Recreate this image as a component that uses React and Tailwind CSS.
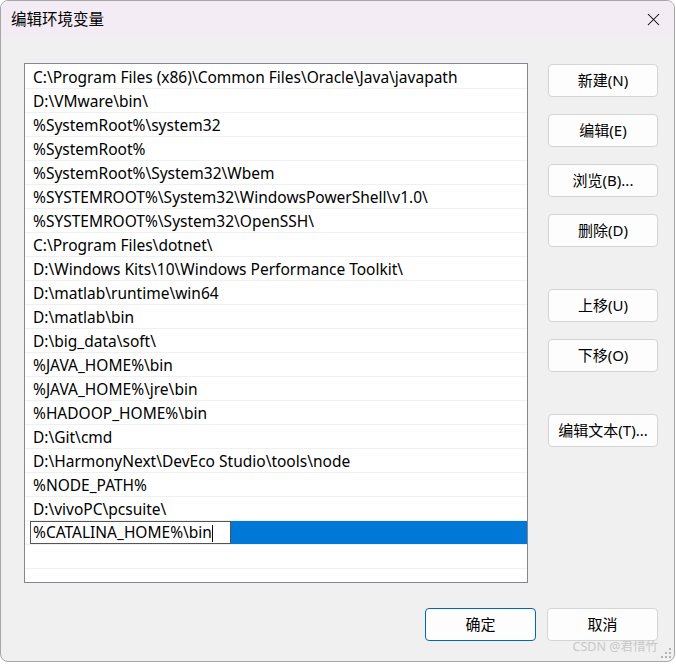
import { X } from "lucide-react";

const paths = [
  "C:\\Program Files (x86)\\Common Files\\Oracle\\Java\\javapath",
  "D:\\VMware\\bin\\",
  "%SystemRoot%\\system32",
  "%SystemRoot%",
  "%SystemRoot%\\System32\\Wbem",
  "%SYSTEMROOT%\\System32\\WindowsPowerShell\\v1.0\\",
  "%SYSTEMROOT%\\System32\\OpenSSH\\",
  "C:\\Program Files\\dotnet\\",
  "D:\\Windows Kits\\10\\Windows Performance Toolkit\\",
  "D:\\matlab\\runtime\\win64",
  "D:\\matlab\\bin",
  "D:\\big_data\\soft\\",
  "%JAVA_HOME%\\bin",
  "%JAVA_HOME%\\jre\\bin",
  "%HADOOP_HOME%\\bin",
  "D:\\Git\\cmd",
  "D:\\HarmonyNext\\DevEco Studio\\tools\\node",
  "%NODE_PATH%",
  "D:\\vivoPC\\pcsuite\\",
];

const font = "font-['Noto_Sans','Noto_Sans_CJK_SC',sans-serif]";

function Btn({ children, primary, className = "" }) {
  return (
    <button
      className={`w-[110px] h-[33px] rounded-[4px] bg-[#fdfdfd] text-[15px] text-black flex items-center justify-center ${
        primary ? "border border-[#0067c0]" : "border border-[#d4d4d4]"
      } ${className}`}
    >
      {children}
    </button>
  );
}

function Grip() {
  const dots = [
    [8, 0], [8, 4], [4, 4], [8, 8], [4, 8], [0, 8],
  ];
  return (
    <svg width="11" height="11" viewBox="0 0 11 11">
      {dots.map(([x, y]) => (
        <rect key={`${x}-${y}`} x={x} y={y} width="2" height="2" fill="#b4b4b4" />
      ))}
    </svg>
  );
}

export default function App() {
  return (
    <div className={`w-[676px] h-[664px] bg-white ${font}`}>
      <div className="relative w-[675px] h-[662px] border border-[#a6a6a6] rounded-[8px] overflow-hidden bg-[#f0f0f0] flex flex-col">
        <div className="h-[37px] bg-[#f4ecf4] flex items-center justify-between pl-[10px] pr-[10px] shrink-0">
          <span className="text-[15.5px] text-black">编辑环境变量</span>
          <X className="w-[21px] h-[21px] text-black" strokeWidth={1.2} />
        </div>

        <div className="flex pl-[23px] pt-[25px]">
          <div className="w-[504px] h-[520px] border border-[#828790] bg-white pt-[1px] text-[15.5px] text-black">
            {paths.map((p) => (
              <div key={p} className="h-[24px] border-b border-[#f0f0f0] flex items-center pl-[8px] pt-[2px] whitespace-nowrap">
                {p}
              </div>
            ))}
            <div className="h-[24px] border-b border-[#f0f0f0] flex items-center pl-[5px]">
              <div className="w-[201px] h-[23px] border border-[#545454] bg-white flex items-center pl-[2px] pt-[1px]">
                <span>%CATALINA_HOME%\bin</span>
                <span className="w-px h-[17px] bg-black" />
              </div>
              <div className="flex-1 h-[23px] bg-[#0078d7]" />
            </div>
            <div className="h-[24px] border-b border-[#f0f0f0]" />
          </div>

          <div className="ml-[20px] pt-[1px] flex flex-col">
            <Btn>新建(N)</Btn>
            <Btn className="mt-[17px]">编辑(E)</Btn>
            <Btn className="mt-[17px]">浏览(B)...</Btn>
            <Btn className="mt-[17px]">删除(D)</Btn>
            <Btn className="mt-[42px]">上移(U)</Btn>
            <Btn className="mt-[17px]">下移(O)</Btn>
            <Btn className="mt-[42px]">编辑文本(T)...</Btn>
          </div>
        </div>

        <div className="flex justify-end gap-[11px] pr-[16px] mt-[25px]">
          <Btn primary className="w-[111px]">确定</Btn>
          <Btn className="w-[111px]">取消</Btn>
        </div>

        <span className="absolute right-[16px] bottom-[4px] text-[12.5px] text-[#c8c8c8]">CSDN @君惜竹</span>
        <div className="absolute right-[2px] bottom-[2px]">
          <Grip />
        </div>
      </div>
    </div>
  );
}
